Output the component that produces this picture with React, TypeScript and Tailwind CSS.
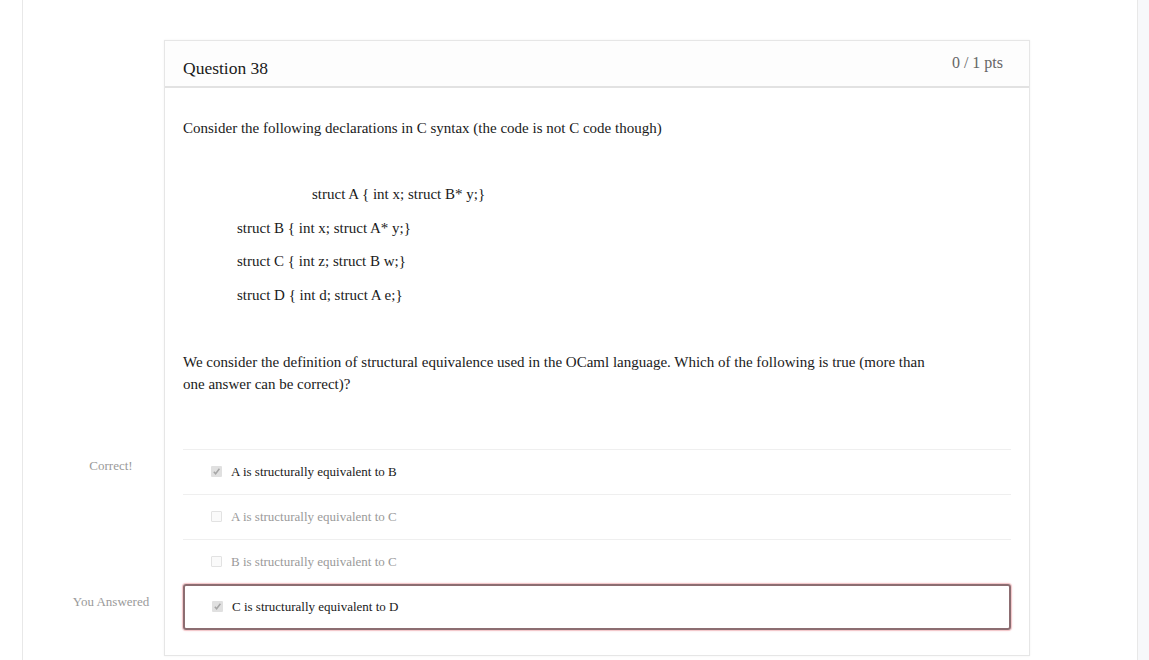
import React from 'react';

type Answer = {
  text: string;
  checked: boolean;
  dim: boolean;
  label?: string;
  selected?: boolean;
};

const answers: Answer[] = [
  { text: 'A is structurally equivalent to B', checked: true, dim: false, label: 'Correct!' },
  { text: 'A is structurally equivalent to C', checked: false, dim: true },
  { text: 'B is structurally equivalent to C', checked: false, dim: true },
  { text: 'C is structurally equivalent to D', checked: true, dim: false, label: 'You Answered', selected: true },
];

const Checkbox: React.FC<{ checked: boolean }> = ({ checked }) =>
  checked ? (
    <span className="w-[11px] h-[11px] rounded-[1px] bg-[#e0e0e0] flex items-center justify-center">
      <svg width="9" height="9" viewBox="0 0 9 9">
        <path d="M1.8 4.8 L3.6 6.8 L7.4 1.8" stroke="#a6a6a6" strokeWidth="1.5" fill="none" />
      </svg>
    </span>
  ) : (
    <span className="w-[11px] h-[11px] rounded-[1px] border border-[#e2e2e2] bg-[#fafafa]" />
  );

const AnswerRow: React.FC<{ answer: Answer }> = ({ answer }) => (
  <div className="relative">
    {answer.label && (
      <div className="absolute right-full mr-[22px] w-[100px] text-center text-[13px] text-[#9a9a9a] top-[50%] -translate-y-[15px]">
        {answer.label}
      </div>
    )}
    <div
      className={
        answer.selected
          ? 'h-[46px] flex items-center pl-[27px] border-2 border-[#8c6d71] rounded-[3px] shadow-[0_0_0_1px_#f3c9cc,0_0_3px_#f0b8bd]'
          : 'h-[45px] flex items-center pl-[28px] border-t border-[#efefef]'
      }
    >
      <Checkbox checked={answer.checked} />
      <span
        className={`ml-[9px] text-[13px] ${answer.dim ? 'text-[#9a9a9a]' : 'text-[#1a1a1a]'}`}
      >
        {answer.text}
      </span>
    </div>
  </div>
);

const App: React.FC = () => {
  return (
    <div className="min-h-screen bg-white flex" style={{ fontFamily: '"Liberation Serif", "Times New Roman", serif' }}>
      <div className="w-[22px] shrink-0" />
      <div className="w-[1116px] shrink-0 border-l border-r border-[#e8e8e8] h-[660px] overflow-hidden">
        <div className="ml-[141px] mt-[40px] w-[866px] border border-[#e6e6e6] shadow-[0_0_2px_rgba(0,0,0,0.06)] bg-white">
          {/* Header */}
          <div className="h-[47px] flex items-start justify-between px-[18px] border-b-2 border-[#e2e2e2] bg-[#fdfdfd]">
            <div className="text-[17.5px] text-[#1a1a1a] mt-[14px]">Question 38</div>
            <div className="text-[16px] text-[#666] mt-[10px] mr-[8px]">0 / 1 pts</div>
          </div>

          {/* Body */}
          <div className="pl-[18px] pr-[18px] pb-[25px] text-[#1a1a1a]">
            <p className="mt-[30px] text-[15px] leading-[20px]">
              Consider the following declarations in C syntax (the code is not C code though)
            </p>

            <div className="mt-[46px] text-[15px] leading-[20px] flex flex-col gap-[13.5px]">
              <div className="pl-[129px]">{'struct A { int x; struct B* y;}'}</div>
              <div className="pl-[54px]">{'struct B { int x; struct A* y;}'}</div>
              <div className="pl-[54px]">{'struct C { int z; struct B w;}'}</div>
              <div className="pl-[54px]">{'struct D { int d; struct A e;}'}</div>
            </div>

            <p className="mt-[46px] w-[750px] text-[15px] leading-[22px]">
              We consider the definition of structural equivalence used in the OCaml language. Which of the following is
              true (more than one answer can be correct)?
            </p>

            <div className="mt-[54px] w-[828px]">
              {answers.map((a) => (
                <AnswerRow key={a.text} answer={a} />
              ))}
            </div>
          </div>
        </div>
      </div>
      <div className="flex-1 bg-[#f7f8fa]" />
    </div>
  );
};

export default App;
